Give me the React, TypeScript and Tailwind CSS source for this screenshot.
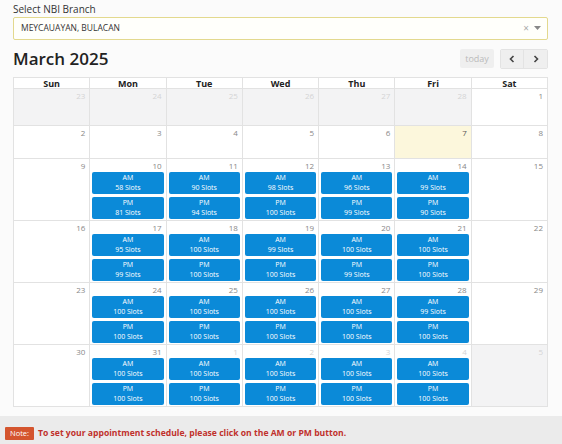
import React from 'react';

type Slot = { am: number; pm: number };
type Cell = { day: number; other?: boolean; today?: boolean; slots?: Slot };

const DAYS = ['Sun', 'Mon', 'Tue', 'Wed', 'Thu', 'Fri', 'Sat'];

const s = (am: number, pm: number): Slot => ({ am, pm });

const WEEKS: Cell[][] = [
  [{ day: 23, other: true }, { day: 24, other: true }, { day: 25, other: true }, { day: 26, other: true }, { day: 27, other: true }, { day: 28, other: true }, { day: 1 }],
  [{ day: 2 }, { day: 3 }, { day: 4 }, { day: 5 }, { day: 6 }, { day: 7, today: true }, { day: 8 }],
  [{ day: 9 }, { day: 10, slots: s(58, 81) }, { day: 11, slots: s(90, 94) }, { day: 12, slots: s(98, 100) }, { day: 13, slots: s(96, 99) }, { day: 14, slots: s(99, 90) }, { day: 15 }],
  [{ day: 16 }, { day: 17, slots: s(95, 99) }, { day: 18, slots: s(100, 100) }, { day: 19, slots: s(99, 100) }, { day: 20, slots: s(100, 99) }, { day: 21, slots: s(100, 100) }, { day: 22 }],
  [{ day: 23 }, { day: 24, slots: s(100, 100) }, { day: 25, slots: s(100, 100) }, { day: 26, slots: s(100, 100) }, { day: 27, slots: s(100, 100) }, { day: 28, slots: s(99, 100) }, { day: 29 }],
  [{ day: 30 }, { day: 31, slots: s(100, 100) }, { day: 1, other: true, slots: s(100, 100) }, { day: 2, other: true, slots: s(100, 100) }, { day: 3, other: true, slots: s(100, 100) }, { day: 4, other: true, slots: s(100, 100) }, { day: 5, other: true }],
];

function SlotButton({ label, count }: { label: string; count: number }) {
  return (
    <button
      type="button"
      className="mx-[2px] h-[22px] rounded-[2px] bg-[#0b8ad8] text-white text-[7px] leading-[10px] flex flex-col items-center justify-center"
    >
      <span>{label}</span>
      <span>{count} Slots</span>
    </button>
  );
}

function DayCell({ cell, tall }: { cell: Cell; tall: boolean }) {
  const bg = cell.today ? 'bg-[#fcf7dc]' : cell.other && !cell.slots ? 'bg-[#f3f3f4]' : 'bg-white';
  return (
    <div className={`${bg} border-r border-b border-[#e2e2e2] flex flex-col`}>
      <div className={`text-right pr-[4px] text-[8px] leading-[11px] pt-[1px] ${cell.other ? 'text-[#d4d4d4]' : cell.today ? 'text-[#555]' : 'text-[#888]'}`}>
        {cell.day}
      </div>
      {tall && cell.slots && (
        <div className="flex flex-col gap-[3px] mt-[1px]">
          <SlotButton label="AM" count={cell.slots.am} />
          <SlotButton label="PM" count={cell.slots.pm} />
        </div>
      )}
    </div>
  );
}

export default function App() {
  return (
    <div className="w-[562px] h-[444px] bg-[#fbfbfb] flex flex-col overflow-hidden" style={{ fontFamily: '"Open Sans", sans-serif' }}>
      <div className="pl-[13px] pr-[14px] pt-[2px]">
        {/* Branch select */}
        <div className="text-[10px] leading-[14px] text-[#333]">Select NBI Branch</div>
        <div className="mt-[1px] h-[23px] border border-[#e3d98e] bg-[#fffffb] rounded-[2px] flex items-center pl-[7px] pr-[6px]">
          <span className="text-[8.5px] text-[#333] flex-1">MEYCAUAYAN, BULACAN</span>
          <span className="text-[10px] text-[#aaa] mr-[5px]">×</span>
          <svg width="7" height="5" viewBox="0 0 7 5">
            <path d="M0 0h7L3.5 4z" fill="#888" />
          </svg>
        </div>

        {/* Toolbar */}
        <div className="mt-[3px] mb-[3px] h-[31px] flex items-center justify-between">
          <h2 className="text-[17px] font-semibold text-[#222] leading-none">March 2025</h2>
          <div className="flex items-center gap-[6px]">
            <button type="button" className="h-[19px] w-[34px] rounded-[2px] bg-[#efefef] text-[9px] text-[#bbb]">today</button>
            <div className="flex h-[20px] rounded-[2px] overflow-hidden border border-[#e3e3e3]">
              <button type="button" className="w-[23px] bg-[#efefef] border-r border-[#e3e3e3] flex items-center justify-center">
                <svg width="6" height="8" viewBox="0 0 6 8"><path d="M4.5 1L1.5 4l3 3" stroke="#444" strokeWidth="1.6" fill="none" /></svg>
              </button>
              <button type="button" className="w-[23px] bg-[#efefef] flex items-center justify-center">
                <svg width="6" height="8" viewBox="0 0 6 8"><path d="M1.5 1l3 3-3 3" stroke="#444" strokeWidth="1.6" fill="none" /></svg>
              </button>
            </div>
          </div>
        </div>

        {/* Calendar */}
        <div className="border-l border-t border-[#e2e2e2] grid grid-cols-7">
          {DAYS.map((d) => (
            <div key={d} className="h-[11px] bg-white border-r border-b border-[#e2e2e2] text-center text-[9px] leading-[11px] font-bold text-[#222]">
              {d}
            </div>
          ))}
        </div>
        <div className="border-l border-[#e2e2e2] grid grid-cols-7 grid-rows-[37px_33px_62px_62px_62px_62px]">
          {WEEKS.map((week, wi) =>
            week.map((cell, ci) => <DayCell key={`${wi}-${ci}`} cell={cell} tall={wi >= 2} />)
          )}
        </div>
      </div>

      {/* Note */}
      <div className="mt-auto h-[28px] bg-[#ebebeb] flex items-center pl-[5px] pt-[6px]">
        <span className="bg-[#d4552e] text-white text-[7.5px] leading-[13px] px-[5px] rounded-[1px]">Note:</span>
        <span className="ml-[4px] text-[8.6px] font-bold text-[#c0312b]">To set your appointment schedule, please click on the AM or PM button.</span>
      </div>
    </div>
  );
}
